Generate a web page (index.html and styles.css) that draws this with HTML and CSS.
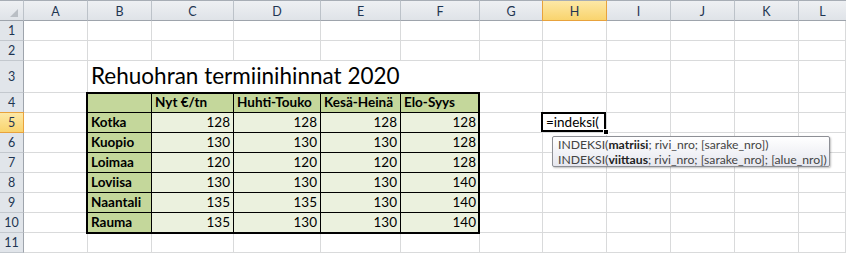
FILE: index.html
```html
<!DOCTYPE html>
<html lang="fi">
<head>
<meta charset="utf-8">
<link rel="stylesheet" href="styles.css">
</head>
<body>
<div class="sheet">
  <div class="ch corner"><span class="tri"></span></div>
  <div class="ch">A</div><div class="ch">B</div><div class="ch">C</div><div class="ch">D</div><div class="ch">E</div><div class="ch">F</div><div class="ch">G</div><div class="ch sel">H</div><div class="ch">I</div><div class="ch">J</div><div class="ch">K</div><div class="ch last">L</div>

  <div class="rh">1</div>
  <div class="c"></div><div class="c"></div><div class="c"></div><div class="c"></div><div class="c"></div><div class="c"></div><div class="c"></div><div class="c"></div><div class="c"></div><div class="c"></div><div class="c"></div><div class="c"></div>

  <div class="rh">2</div>
  <div class="c"></div><div class="c"></div><div class="c"></div><div class="c"></div><div class="c"></div><div class="c"></div><div class="c"></div><div class="c"></div><div class="c"></div><div class="c"></div><div class="c"></div><div class="c"></div>

  <div class="rh">3</div>
  <div class="c"></div>
  <div class="c title">Rehuohran termiinihinnat 2020</div>
  <div class="c"></div><div class="c"></div><div class="c"></div><div class="c"></div><div class="c"></div><div class="c"></div>

  <div class="tbl">
    <div class="t g"></div><div class="t g b">Nyt €/tn</div><div class="t g b">Huhti-Touko</div><div class="t g b">Kesä-Heinä</div><div class="t g b">Elo-Syys</div>
    <div class="t g b">Kotka</div><div class="t n">128</div><div class="t n">128</div><div class="t n">128</div><div class="t n">128</div>
    <div class="t g b">Kuopio</div><div class="t n">130</div><div class="t n">130</div><div class="t n">130</div><div class="t n">128</div>
    <div class="t g b">Loimaa</div><div class="t n">120</div><div class="t n">120</div><div class="t n">120</div><div class="t n">128</div>
    <div class="t g b">Loviisa</div><div class="t n">130</div><div class="t n">130</div><div class="t n">130</div><div class="t n">140</div>
    <div class="t g b">Naantali</div><div class="t n">135</div><div class="t n">135</div><div class="t n">130</div><div class="t n">140</div>
    <div class="t g b">Rauma</div><div class="t n">135</div><div class="t n">130</div><div class="t n">130</div><div class="t n">140</div>
  </div>

  <div class="rh">4</div>
  <div class="c"></div>
  <div class="c"></div><div class="c"></div><div class="c"></div><div class="c"></div><div class="c"></div><div class="c"></div>

  <div class="rh sel">5</div>
  <div class="c"></div>
  <div class="c"></div>
  <div class="c active">=indeksi(
    <span class="handle"></span>
    <div class="tip">
      <div>INDEKSI(<b>matriisi</b>; rivi_nro; [sarake_nro])</div>
      <div>INDEKSI(<b>viittaus</b>; rivi_nro; [sarake_nro]; [alue_nro])</div>
    </div>
  </div>
  <div class="c"></div><div class="c"></div><div class="c"></div><div class="c"></div>

  <div class="rh">6</div>
  <div class="c"></div>
  <div class="c"></div><div class="c"></div><div class="c"></div><div class="c"></div><div class="c"></div><div class="c"></div>

  <div class="rh">7</div>
  <div class="c"></div>
  <div class="c"></div><div class="c"></div><div class="c"></div><div class="c"></div><div class="c"></div><div class="c"></div>

  <div class="rh">8</div>
  <div class="c"></div>
  <div class="c"></div><div class="c"></div><div class="c"></div><div class="c"></div><div class="c"></div><div class="c"></div>

  <div class="rh">9</div>
  <div class="c"></div>
  <div class="c"></div><div class="c"></div><div class="c"></div><div class="c"></div><div class="c"></div><div class="c"></div>

  <div class="rh">10</div>
  <div class="c"></div>
  <div class="c"></div><div class="c"></div><div class="c"></div><div class="c"></div><div class="c"></div><div class="c"></div>

  <div class="rh">11</div>
  <div class="c"></div><div class="c"></div><div class="c"></div><div class="c"></div><div class="c"></div><div class="c"></div><div class="c"></div><div class="c"></div><div class="c"></div><div class="c"></div><div class="c"></div><div class="c"></div>
</div>
</body>
</html>
```

FILE: styles.css
```css
* { box-sizing: border-box; }
html, body { margin: 0; padding: 0; background: #fff; }
body { width: 846px; height: 254px; overflow: hidden; font-family: Lato, "Open Sans", sans-serif; }

.sheet {
  display: grid;
  grid-template-columns: 24px 64px 64px 82px 87px 80px 79px 63px 64px 64px 64px 64px 1fr;
  grid-template-rows: 21px 20px 20px 32px repeat(8, 20px);
  width: 846px;
}

.ch {
  background: linear-gradient(#eef0f3, #dfe3e8);
  border-top: 1px solid #a7adb5;
  border-right: 1px solid #bcc2c9;
  border-bottom: 1px solid #9ea4ac;
  color: #1e3552;
  font-size: 12.5px;
  display: flex;
  align-items: center;
  justify-content: center;
  padding-top: 1px;
}
.ch.last { border-right: none; }
.ch.corner { position: relative; }
.tri {
  position: absolute;
  right: 5px;
  bottom: 3px;
  width: 0;
  height: 0;
  border-left: 8px solid transparent;
  border-bottom: 8px solid #b9bec4;
}
.ch.sel {
  background: linear-gradient(#fde8a6, #f9d46e);
  border-left: 1px solid #e8a23c;
  border-bottom: 1px solid #e8a23c;
  border-right: 1px solid #e8a23c;
  margin-left: -1px;
}

.rh {
  background: #e1e5ea;
  border-right: 1px solid #9ea4ac;
  border-bottom: 1px solid #c3c8ce;
  color: #1e3552;
  font-size: 12.5px;
  display: flex;
  align-items: center;
  justify-content: center;
}
.rh.sel {
  background: linear-gradient(#fde8a6, #f9d46e);
  border-right: 1px solid #e8a23c;
  border-bottom: 1px solid #e8a23c;
  border-top: 1px solid #e8a23c;
  margin-top: -1px;
}

.c {
  border-right: 1px solid #d9dadb;
  border-bottom: 1px solid #d9dadb;
  font-size: 13.5px;
  color: #000;
  display: flex;
  align-items: flex-end;
  padding: 0 3px 2px;
  white-space: nowrap;
}
.c.title {
  grid-column: span 5;
  font-size: 22.5px;
  padding: 0 3px 3px;
  border-right: none;
}

.c.active { position: relative; overflow: visible; }
.c.active::after {
  content: "";
  position: absolute;
  left: -2px;
  top: -1px;
  right: 0;
  bottom: 0;
  border: 2px solid #000;
  pointer-events: none;
}
.handle {
  position: absolute;
  right: -3px;
  bottom: -3px;
  width: 6px;
  height: 6px;
  background: #000;
  border: 1px solid #fff;
  z-index: 2;
}

.tip {
  position: absolute;
  left: 9px;
  top: 23px;
  width: 278px;
  height: 31px;
  z-index: 5;
  background: linear-gradient(#ffffff, #e6e7ef);
  border: 1px solid #8d8f95;
  border-radius: 2px;
  box-shadow: 1px 1px 2px rgba(0,0,0,0.25);
  color: #444;
  font-size: 12.2px;
  line-height: 15px;
  padding: 0 0 0 5px;
  display: flex;
  flex-direction: column;
}
.tip b { color: #222; }

.tbl {
  grid-column: 3 / 8;
  grid-row: 5 / 12;
  display: grid;
  grid-template-columns: 64px 82px 87px 80px 79px;
  grid-template-rows: repeat(7, 20px);
  position: relative;
}
.tbl::after {
  content: "";
  position: absolute;
  left: -2px;
  top: -1px;
  right: 0;
  bottom: -1px;
  border: 2px solid #000;
  pointer-events: none;
}
.t {
  border-right: 1px solid #000;
  border-bottom: 1px solid #000;
  background: #ebf1de;
  font-size: 13.5px;
  display: flex;
  align-items: flex-end;
  padding: 0 3px 2px;
  white-space: nowrap;
}
.t.g { background: #c4d79b; }
.t.b { font-weight: bold; }
.t.n { justify-content: flex-end; }
```
